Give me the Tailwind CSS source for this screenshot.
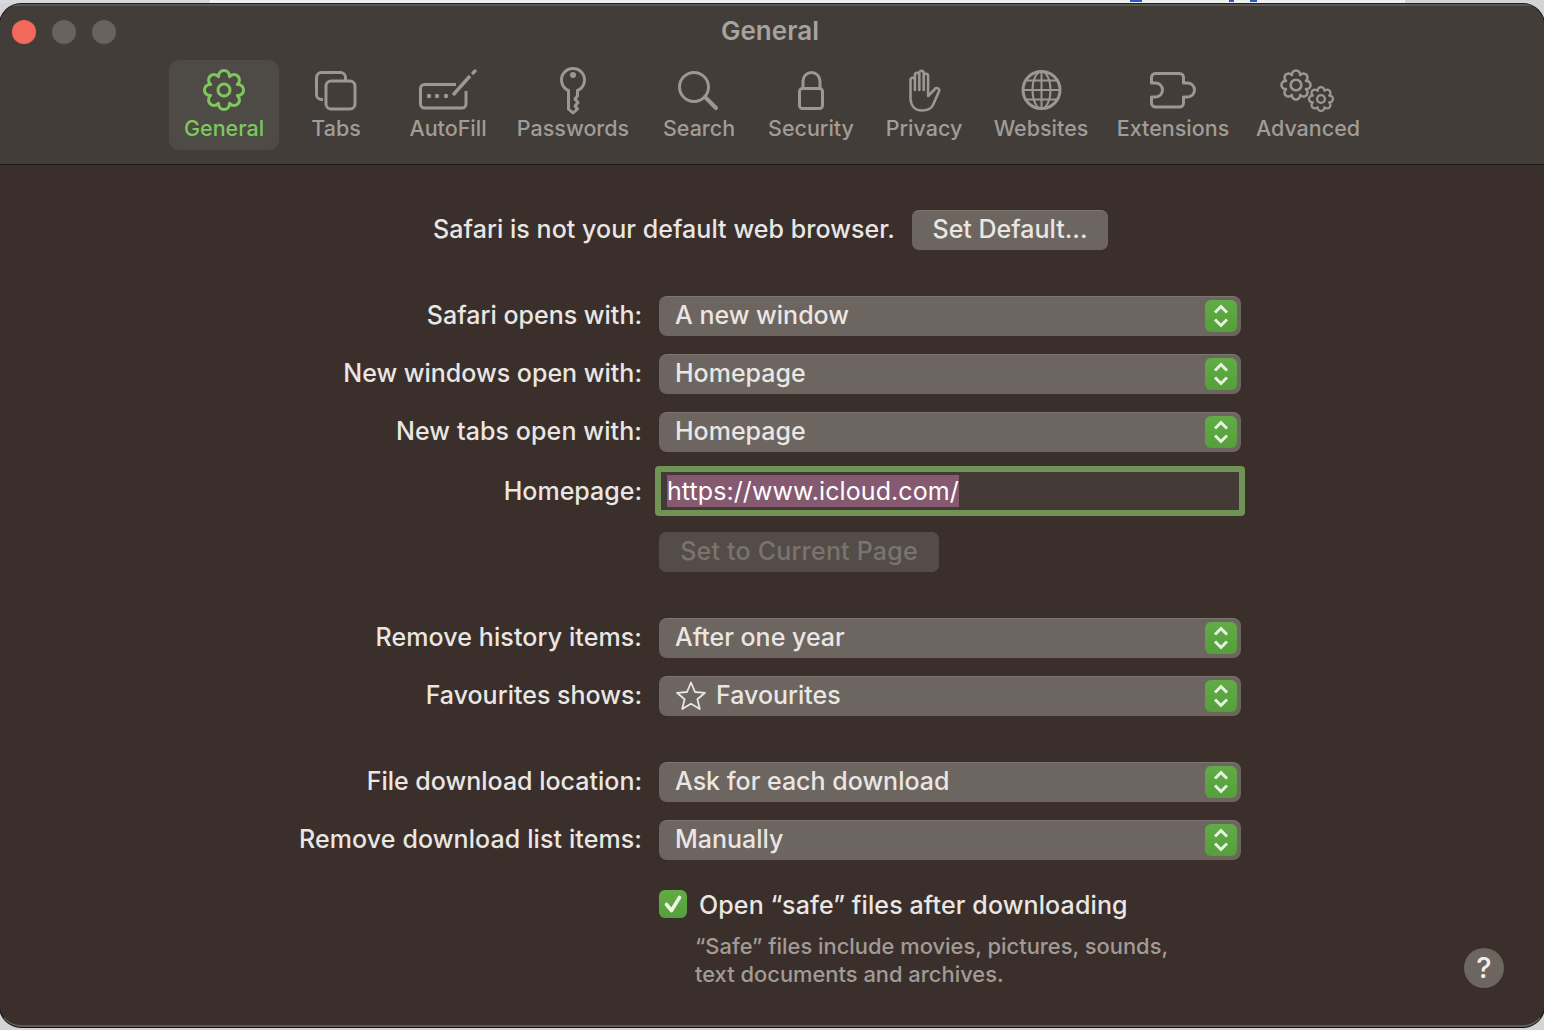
<!DOCTYPE html>
<html lang="en">
<head>
  <meta charset="UTF-8" />
  <meta name="viewport" content="width=device-width, initial-scale=1.0">
  <title>General</title>
  <script src="https://cdn.jsdelivr.net/npm/@tailwindcss/browser@4"></script>
</head>
<body class="bg-[#d4d4d6] h-[1030px] w-[1544px] overflow-hidden font-['Inter','Liberation_Sans',sans-serif] relative">

  <!-- bits of the page behind the window -->
  <div class="absolute top-0 left-0 w-[210px] h-[3px] bg-[#d9d9dd]"></div>
  <div class="absolute top-0 left-[210px] w-[1195px] h-[3px] bg-[#f0f0f2]"></div>
  <div class="absolute top-0 left-[1130px] w-[12px] h-[2px] bg-[#2a5bc0]"></div>
  <div class="absolute top-0 left-[1229px] w-[5px] h-[2px] bg-[#2a5bc0]"></div>
  <div class="absolute top-0 left-[1250px] w-[7px] h-[2px] bg-[#2a5bc0]"></div>

  <!-- Window -->
  <div class="absolute top-[3px] left-[-1px] w-[1546px] h-[1024px] rounded-[22px] overflow-hidden border border-[#24201e] border-b-2 border-b-[#5f5b57] shadow-[0_1px_0_#111] bg-[#3a2f2b] text-[#e9e6e3]">

    <!-- Toolbar -->
    <div class="relative h-[161px] bg-[#423d38] border-b border-[#1d1b1a] border-t-2 border-t-[#5a5652]">
      <div class="absolute top-[14px] left-0 flex gap-[16px] pl-[12px]">
        <div class="w-[24px] h-[24px] rounded-full bg-[#f2695c]"></div>
        <div class="w-[24px] h-[24px] rounded-full bg-[#69635f]"></div>
        <div class="w-[24px] h-[24px] rounded-full bg-[#69635f]"></div>
      </div>
      <div class="absolute top-[9px] left-[1px] w-[1538px] text-center text-[26px] leading-[32px] font-semibold text-[#a7a39f]">General</div>

      <div class="absolute top-[54px] left-[169px] flex text-[21.5px] font-medium leading-[24px] text-[#a09c98]">
        <div class="w-[110px] h-[90px] rounded-[10px] bg-[#4e4a45] flex flex-col items-center pt-[6px] text-[#7cc85c]">
          <svg class="w-[56px] h-[48px] overflow-visible" viewBox="0 0 56 48" fill="none" stroke="#7cc85c">
            <g transform="translate(28 24) scale(1.88)" stroke-width="1.6">
              <path d="M7.11 -2.95C11.5 -3.08 11.5 3.08 7.11 2.95C10.31 5.95 5.95 10.31 2.94 7.11C3.08 11.5 -3.08 11.5 -2.95 7.11C-5.95 10.31 -10.31 5.95 -7.11 2.94C-11.5 3.08 -11.5 -3.08 -7.11 -2.95C-10.31 -5.95 -5.95 -10.31 -2.94 -7.11C-3.08 -11.5 3.08 -11.5 2.95 -7.11C5.95 -10.31 10.31 -5.95 7.11 -2.95Z" stroke-linejoin="round"/>
              <circle r="3.2"/>
            </g>
          </svg>
          <span class="mt-[2px]">General</span>
        </div>
        <div class="w-[114px] flex flex-col items-center pt-[6px]">
          <svg class="w-[56px] h-[48px] overflow-visible" viewBox="0 0 56 48" fill="none" stroke="#9b9793" stroke-width="3">
            <path d="M15 33.5h-1.5a5 5 0 0 1-5-5V11.5a5 5 0 0 1 5-5h19a5 5 0 0 1 5 5V14"/>
            <rect x="18" y="15" width="29" height="28" rx="5"/>
          </svg>
          <span class="mt-[2px]">Tabs</span>
        </div>
        <div class="w-[110px] flex flex-col items-center pt-[6px]">
          <svg class="w-[56px] h-[48px] overflow-visible" viewBox="0 0 56 48" fill="none" stroke="#9b9793" stroke-width="3">
            <path d="M36 18.5H4.5a4 4 0 0 0-4 4V38a4 4 0 0 0 4 4H42a4 4 0 0 0 4-4V25"/>
            <path d="M33 29L50 10" stroke-width="3.4"/>
            <path d="M53 7l2-2" stroke-width="3.4" stroke-linecap="round"/>
            <g fill="#9b9793" stroke="none"><circle cx="9" cy="30" r="2.2"/><circle cx="17" cy="30" r="2.2"/><circle cx="26" cy="30" r="2.2"/></g>
          </svg>
          <span class="mt-[2px]">AutoFill</span>
        </div>
        <div class="w-[140px] flex flex-col items-center pt-[6px]">
          <svg class="w-[56px] h-[48px] overflow-visible" viewBox="0 0 56 48" fill="none" stroke="#9b9793" stroke-width="3" stroke-linejoin="round">
            <path d="M23.5 24.5a11.5 11.5 0 1 1 9 0V30L30 33l3 3.5-3 3.5 2.5 3L28 47l-4.500-4Z"/>
            <circle cx="28" cy="9" r="3" fill="#9b9793" stroke="none"/>
          </svg>
          <span class="mt-[2px]">Passwords</span>
        </div>
        <div class="w-[112px] flex flex-col items-center pt-[6px]">
          <svg class="w-[56px] h-[48px] overflow-visible" viewBox="0 0 56 48" fill="none" stroke="#9b9793" stroke-width="3">
            <circle cx="23" cy="21" r="14.500"/>
            <path d="M34 31l11 11" stroke-width="4" stroke-linecap="round"/>
          </svg>
          <span class="mt-[2px]">Search</span>
        </div>
        <div class="w-[112px] flex flex-col items-center pt-[6px]">
          <svg class="w-[56px] h-[48px] overflow-visible" viewBox="0 0 56 48" fill="none" stroke="#9b9793" stroke-width="3">
            <rect x="16.500" y="22.500" width="23" height="20" rx="3"/>
            <path d="M20 22V15a8.500 8.500 0 0 1 17 0V22"/>
          </svg>
          <span class="mt-[2px]">Security</span>
        </div>
        <div class="w-[114px] flex flex-col items-center pt-[6px]">
          <svg class="w-[56px] h-[48px] overflow-visible" viewBox="0 0 56 48" fill="none" stroke="#9b9793" stroke-width="2.6" stroke-linejoin="round">
            <path d="M26 44.500C19 44.500 15 40 14.500 33V14a2.200 2.200 0 0 1 4.400 0V24V9a2.200 2.200 0 0 1 4.400 0V24V7a2.200 2.200 0 0 1 4.400 0V24V10a2.200 2.200 0 0 1 4.400 0V30L38.500 23.500a2.400 2.400 0 0 1 4.400 2L37 39C35 43 31 44.500 26 44.500Z"/>
          </svg>
          <span class="mt-[2px]">Privacy</span>
        </div>
        <div class="w-[120px] flex flex-col items-center pt-[6px]">
          <svg class="w-[56px] h-[48px] overflow-visible" viewBox="0 0 56 48" fill="none" stroke="#9b9793" stroke-width="2">
            <circle cx="28.500" cy="24" r="18.500" stroke-width="3"/>
            <ellipse cx="28.500" cy="24" rx="9" ry="18.500"/>
            <path d="M28.500 5.500V42.500M10 24H47M13 14.500H44M13 33.500H44"/>
          </svg>
          <span class="mt-[2px]">Websites</span>
        </div>
        <div class="w-[144px] flex flex-col items-center pt-[6px]">
          <svg class="w-[56px] h-[48px] overflow-visible" viewBox="0 0 56 48" fill="none" stroke="#9b9793" stroke-width="3" stroke-linejoin="round">
            <path d="M10.500 7.500H34.500a4 4 0 0 1 4 4V17h4a7 7 0 0 1 0 14h-4V37a4 4 0 0 1-4 4H10.500a4 4 0 0 1-4-4V31h4a7 7 0 0 0 0-14h-4V11.500a4 4 0 0 1 4-4Z"/>
          </svg>
          <span class="mt-[2px]">Extensions</span>
        </div>
        <div class="w-[126px] flex flex-col items-center pt-[6px]">
          <svg class="w-[56px] h-[48px] overflow-visible" viewBox="0 0 56 48" fill="none" stroke="#9b9793">
            <g transform="translate(16 19) scale(1.4)" stroke-width="1.8">
              <path d="M7.11 -2.95C11.5 -3.08 11.5 3.08 7.11 2.95C10.31 5.95 5.95 10.31 2.94 7.11C3.08 11.5 -3.08 11.5 -2.95 7.11C-5.95 10.31 -10.31 5.95 -7.11 2.94C-11.5 3.08 -11.5 -3.08 -7.11 -2.95C-10.31 -5.95 -5.95 -10.31 -2.94 -7.11C-3.08 -11.5 3.08 -11.5 2.95 -7.11C5.95 -10.31 10.31 -5.95 7.11 -2.95Z" stroke-linejoin="round"/>
              <circle r="3.8"/>
            </g>
            <g transform="translate(41 33) scale(1.15)" stroke-width="2">
              <path d="M7.11 -2.95C11.5 -3.08 11.5 3.08 7.11 2.95C10.31 5.95 5.95 10.31 2.94 7.11C3.08 11.5 -3.08 11.5 -2.95 7.11C-5.95 10.31 -10.31 5.95 -7.11 2.94C-11.5 3.08 -11.5 -3.08 -7.11 -2.95C-10.31 -5.95 -5.95 -10.31 -2.94 -7.11C-3.08 -11.5 3.08 -11.5 2.95 -7.11C5.95 -10.31 10.31 -5.95 7.11 -2.95Z" stroke-linejoin="round"/>
              <circle r="3.4"/>
            </g>
          </svg>
          <span class="mt-[2px]">Advanced</span>
        </div>
      </div>
    </div>

    <!-- Settings form -->
    <div class="text-[25px] leading-[32px] font-medium">

      <div class="mt-[45px] w-[1108px] flex justify-end items-center gap-[17px]">
        <span class="pb-[2px] tracking-[0.05px]">Safari is not your default web browser.</span>
        <div class="w-[196px] h-[40px] rounded-[7px] bg-[#6d6560] border-t border-[#7c7570] flex items-center justify-center pb-[3px]">Set Default...</div>
      </div>

      <div class="mt-[46px] flex items-center h-[40px]">
        <div class="w-[642px] text-right pb-[2px]">Safari opens with:</div>
        <div class="ml-[17px] w-[582px] h-[40px] rounded-[8px] bg-[#6d6560] border-t border-[#7c7570] flex items-center justify-between pl-[16px] pr-[4px]">
          <span class="pb-[3px]">A new window</span>
          <div class="w-[32px] h-[32px] -mt-[1px] rounded-[6px] bg-linear-to-b from-[#62ac46] to-[#559f3c] flex items-center justify-center">
            <svg class="w-[32px] h-[32px]" viewBox="0 0 32 32" fill="none" stroke="#e6f2df" stroke-width="3"><path d="M10 12.500l6-6 6 6M10 19.500l6 6 6-6"/></svg>
          </div>
        </div>
      </div>

      <div class="mt-[18px] flex items-center h-[40px]">
        <div class="w-[642px] text-right pb-[2px]">New windows open with:</div>
        <div class="ml-[17px] w-[582px] h-[40px] rounded-[8px] bg-[#6d6560] border-t border-[#7c7570] flex items-center justify-between pl-[16px] pr-[4px]">
          <span class="pb-[3px]">Homepage</span>
          <div class="w-[32px] h-[32px] -mt-[1px] rounded-[6px] bg-linear-to-b from-[#62ac46] to-[#559f3c] flex items-center justify-center">
            <svg class="w-[32px] h-[32px]" viewBox="0 0 32 32" fill="none" stroke="#e6f2df" stroke-width="3"><path d="M10 12.500l6-6 6 6M10 19.500l6 6 6-6"/></svg>
          </div>
        </div>
      </div>

      <div class="mt-[18px] flex items-center h-[40px]">
        <div class="w-[642px] text-right pb-[2px] tracking-[0.1px]">New tabs open with:</div>
        <div class="ml-[17px] w-[582px] h-[40px] rounded-[8px] bg-[#6d6560] border-t border-[#7c7570] flex items-center justify-between pl-[16px] pr-[4px]">
          <span class="pb-[3px]">Homepage</span>
          <div class="w-[32px] h-[32px] -mt-[1px] rounded-[6px] bg-linear-to-b from-[#62ac46] to-[#559f3c] flex items-center justify-center">
            <svg class="w-[32px] h-[32px]" viewBox="0 0 32 32" fill="none" stroke="#e6f2df" stroke-width="3"><path d="M10 12.500l6-6 6 6M10 19.500l6 6 6-6"/></svg>
          </div>
        </div>
      </div>

      <div class="mt-[14px] flex items-center h-[50px]">
        <div class="w-[642px] text-right">Homepage:</div>
        <div class="ml-[13px] w-[590px] h-[50px] rounded-[4px] bg-[#433a35] border-[6px] border-[#6f9455] flex items-center pl-[6px] text-white">
          <span class="bg-[#855a70] h-[32px] leading-[32px] font-normal tracking-[0.09px]">https://www.icloud.com/</span>
        </div>
      </div>

      <div class="mt-[16px] ml-[659px] w-[280px] h-[40px] rounded-[7px] bg-[#544c48] flex items-center justify-center pb-[2px] tracking-[0.2px] text-[#7b736e]">Set to Current Page</div>

      <div class="mt-[46px] flex items-center h-[40px]">
        <div class="w-[642px] text-right pb-[2px] tracking-[0.1px]">Remove history items:</div>
        <div class="ml-[17px] w-[582px] h-[40px] rounded-[8px] bg-[#6d6560] border-t border-[#7c7570] flex items-center justify-between pl-[16px] pr-[4px]">
          <span class="pb-[3px]">After one year</span>
          <div class="w-[32px] h-[32px] -mt-[1px] rounded-[6px] bg-linear-to-b from-[#62ac46] to-[#559f3c] flex items-center justify-center">
            <svg class="w-[32px] h-[32px]" viewBox="0 0 32 32" fill="none" stroke="#e6f2df" stroke-width="3"><path d="M10 12.500l6-6 6 6M10 19.500l6 6 6-6"/></svg>
          </div>
        </div>
      </div>

      <div class="mt-[18px] flex items-center h-[40px]">
        <div class="w-[642px] text-right pb-[2px]">Favourites shows:</div>
        <div class="ml-[17px] w-[582px] h-[40px] rounded-[8px] bg-[#6d6560] border-t border-[#7c7570] flex items-center justify-between pl-[16px] pr-[4px]">
          <span class="flex items-center gap-[9px] pb-[3px]">
            <svg class="w-[32px] h-[30px]" viewBox="0 0 32 30" fill="none" stroke="#e9e6e3" stroke-width="1.800" stroke-linejoin="round"><path d="M16 2.500l4 9.500 10 .8-7.600 6.500 2.400 9.700L16 23.700l-8.800 5.300 2.400-9.700L2 12.800l10-.8Z"/></svg>
            Favourites
          </span>
          <div class="w-[32px] h-[32px] -mt-[1px] rounded-[6px] bg-linear-to-b from-[#62ac46] to-[#559f3c] flex items-center justify-center">
            <svg class="w-[32px] h-[32px]" viewBox="0 0 32 32" fill="none" stroke="#e6f2df" stroke-width="3"><path d="M10 12.500l6-6 6 6M10 19.500l6 6 6-6"/></svg>
          </div>
        </div>
      </div>

      <div class="mt-[46px] flex items-center h-[40px]">
        <div class="w-[642px] text-right pb-[2px]">File download location:</div>
        <div class="ml-[17px] w-[582px] h-[40px] rounded-[8px] bg-[#6d6560] border-t border-[#7c7570] flex items-center justify-between pl-[16px] pr-[4px]">
          <span class="pb-[3px]">Ask for each download</span>
          <div class="w-[32px] h-[32px] -mt-[1px] rounded-[6px] bg-linear-to-b from-[#62ac46] to-[#559f3c] flex items-center justify-center">
            <svg class="w-[32px] h-[32px]" viewBox="0 0 32 32" fill="none" stroke="#e6f2df" stroke-width="3"><path d="M10 12.500l6-6 6 6M10 19.500l6 6 6-6"/></svg>
          </div>
        </div>
      </div>

      <div class="mt-[18px] flex items-center h-[40px]">
        <div class="w-[642px] text-right pb-[2px] tracking-[0.1px]">Remove download list items:</div>
        <div class="ml-[17px] w-[582px] h-[40px] rounded-[8px] bg-[#6d6560] border-t border-[#7c7570] flex items-center justify-between pl-[16px] pr-[4px]">
          <span class="pb-[3px]">Manually</span>
          <div class="w-[32px] h-[32px] -mt-[1px] rounded-[6px] bg-linear-to-b from-[#62ac46] to-[#559f3c] flex items-center justify-center">
            <svg class="w-[32px] h-[32px]" viewBox="0 0 32 32" fill="none" stroke="#e6f2df" stroke-width="3"><path d="M10 12.500l6-6 6 6M10 19.500l6 6 6-6"/></svg>
          </div>
        </div>
      </div>

      <div class="mt-[30px] ml-[659px] flex items-center gap-[12px] h-[28px]">
        <div class="w-[28px] h-[28px] rounded-[6px] bg-linear-to-b from-[#62ac46] to-[#559f3c] flex items-center justify-center">
          <svg class="w-[28px] h-[28px]" viewBox="0 0 28 28" fill="none" stroke="#eef6e9" stroke-width="3.600" stroke-linecap="round" stroke-linejoin="round"><path d="M7.500 14.500l5 6 8-13"/></svg>
        </div>
        <span class="pt-[1px] tracking-[0.12px]">Open “safe” files after downloading</span>
      </div>

      <div class="mt-[14px] ml-[695px] text-[21.9px] leading-[28px] text-[#a19b97]">
        <p>“Safe” files include movies, pictures, sounds,</p>
        <p>text documents and archives.</p>
      </div>
    </div>

    <!-- Help button -->
    <div class="absolute left-[1464px] top-[944px] w-[40px] h-[40px] rounded-full bg-[#6d6560] flex items-center justify-center text-[29px] font-medium text-[#f0eeec]">?</div>
  </div>

</body>
</html>
